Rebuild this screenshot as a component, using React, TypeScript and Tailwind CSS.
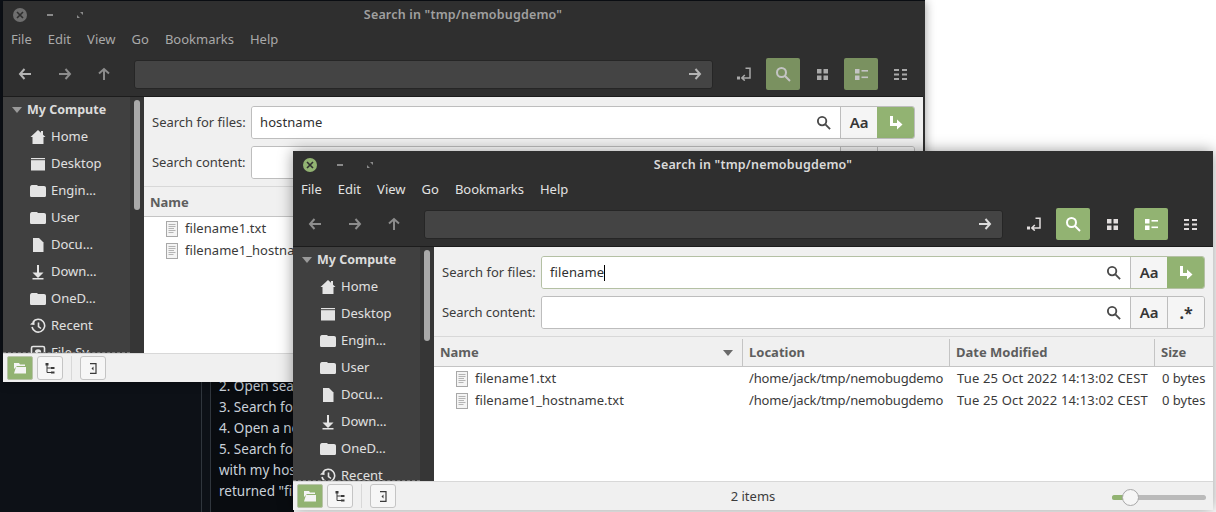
import React from "react";

const font = { fontFamily: '"Noto Sans", sans-serif' };

function Arrow({ dir, color }: { dir: "l" | "r" | "u"; color: string }) {
  const d = dir === "l" ? "M14 8H3M7.5 3L3 8l4.5 5" : dir === "r" ? "M2 8h11M8.5 3L13 8l-4.5 5" : "M8 14V3M3 7.5L8 3l5 4.5";
  return (
    <svg width="16" height="16" viewBox="0 0 16 16" fill="none" stroke={color} strokeWidth="2">
      <path d={d} />
    </svg>
  );
}

function Search({ color, size = 16 }: { color: string; size?: number }) {
  return (
    <svg width={size} height={size} viewBox="0 0 16 16" fill="none" stroke={color} strokeWidth="2">
      <circle cx="6.5" cy="6.5" r="4.5" />
      <path d="M10 10l5 5" />
    </svg>
  );
}

function SideIcon({ kind }: { kind: string }) {
  const c = "#e4e4e4";
  let body: React.ReactNode = null;
  if (kind === "home") body = <path fill={c} d="M8 1L0.5 8H2.5V15H13.5V8H15.5L13 5.7V2H11V3.8Z" />;
  if (kind === "desktop") body = <><rect x="1" y="2" width="14" height="12.5" fill={c} /><rect x="1" y="3.2" width="14" height="1" fill="#404040" /></>;
  if (kind === "folder") body = <path fill={c} d="M0 4.5C0 3 .8 2 2 2H7L8 3H14C15.2 3 16 3.8 16 5V12.5C16 13.5 15.3 14 14.3 14H1.7C.7 14 0 13.5 0 12.5Z" />;
  if (kind === "doc") body = <path fill={c} d="M3 1H9L13.5 5.5V15H3Z" />;
  if (kind === "down") body = <path fill={c} d="M7 1H9V8.5H13.5L8 14L2.5 8.5H7ZM2.5 14H13.5V15.5H2.5Z" />;
  if (kind === "recent") body = <g fill="none" stroke={c} strokeWidth="1.6"><path d="M3 4A6.4 6.4 0 1 1 2 9" /><path d="M8.5 4.5V8.5L11 10.5" /><path fill={c} stroke="none" d="M0 6.5L4.5 2.5V7Z" /></g>;
  if (kind === "disk") body = <g><rect x="1.5" y="1.5" width="13" height="13" rx="1.5" fill="none" stroke={c} strokeWidth="1.6" /><circle cx="8" cy="7.5" r="3.2" fill={c} /></g>;
  return <svg width="16" height="16" viewBox="0 0 16 16" className="shrink-0">{body}</svg>;
}

function FileIcon() {
  return (
    <svg width="12" height="16" viewBox="0 0 12 16" className="shrink-0">
      <rect x="0.5" y="0.5" width="11" height="15" fill="#f4f4f4" stroke="#a8a8a8" />
      <path d="M2.5 3.5H9.5M2.5 5.5H9.5M2.5 7.5H8M2.5 9.5H9.5M2.5 11.5H7.5" stroke="#b4b4b4" strokeWidth="1" />
    </svg>
  );
}

const places = [
  ["home", "Home"],
  ["desktop", "Desktop"],
  ["folder", "Engin…"],
  ["folder", "User"],
  ["doc", "Docu…"],
  ["down", "Down…"],
  ["folder", "OneD…"],
  ["recent", "Recent"],
  ["disk", "File Sy…"],
];

function ToggleBox({ active, on, children }: { active: boolean; on?: boolean; children: React.ReactNode }) {
  const bg = on ? (active ? "bg-[#92b372]" : "bg-[#7a9160]") : "";
  return <div className={`w-[34px] h-[32px] rounded-[2px] flex items-center justify-center shrink-0 ${bg}`}>{children}</div>;
}

function Entry({ value, caret, focus, last }: { value?: string; caret?: boolean; focus?: boolean; last: React.ReactNode }) {
  return (
    <div className={`flex-1 h-[33px] flex rounded-[3px] border ${focus ? "border-[#b4c0a4]" : "border-[#bdbdbd]"} overflow-hidden`}>
      <div className="flex-1 bg-white flex items-center pl-2 pr-[9px] text-[13px] tracking-[0.1px] text-[#303030]">
        <span>{value}</span>
        {caret && <span className="w-px h-[16px] bg-black" />}
        <span className="ml-auto"><Search color="#4a4a4a" size={15} /></span>
      </div>
      <div className="w-[37px] border-l border-[#bdbdbd] bg-[#f5f5f5] flex items-center justify-center text-[15px] font-semibold tracking-[-0.3px] text-[#353535]">
        Aa
      </div>
      {last}
    </div>
  );
}

function Win({ active, value, caret, items, className, title, thumb }: { active: boolean; value: string; caret?: boolean; items: boolean; className: string; title: string; thumb: string }) {
  const menuText = active ? "text-[#e2e2e2]" : "text-[#a9a9a9]";
  const tool = active ? "#e2dede" : "#a9a9a9";
  const disabled = "#8c8c8c";
  return (
    <div className={`absolute flex flex-col bg-[#2f2f2f] overflow-hidden ${className}`} style={font}>
      <div className="h-[29px] shrink-0 flex items-center relative pb-[2px]">
        <div className={`ml-[10px] w-[14px] h-[14px] rounded-full flex items-center justify-center ${active ? "bg-[#92b372]" : "bg-[#6f6f6f]"}`}>
          <svg width="8" height="8" viewBox="0 0 8 8" stroke="#2f2f2f" strokeWidth="1.6"><path d="M1 1l6 6M7 1L1 7" /></svg>
        </div>
        <div className="ml-[20px] w-[6px] h-[2px] bg-[#8a8a8a]" />
        <svg width="6" height="6" viewBox="0 0 6 6" className="ml-[24px]" fill="#8a8a8a"><path d="M3 0H6V3ZM0 3V6H3Z" /></svg>
        <div className={`absolute inset-0 flex items-center justify-center text-[12.5px] font-semibold tracking-[0.18px] ${active ? "text-[#dadada]" : "text-[#a0a0a0]"}`}>{title}</div>
      </div>
      <div className={`h-[19px] shrink-0 flex items-center pl-[8px] gap-[16px] text-[13px] ${menuText}`}>
        {["File", "Edit", "View", "Go", "Bookmarks", "Help"].map((m) => <span key={m}>{m}</span>)}
      </div>
      <div className="h-[48px] shrink-0 flex items-center border-b border-[#1c1c1c] pt-[4px] pb-px">
        <div className="flex items-center w-[131px] pl-[14px] gap-[23.5px]">
          <Arrow dir="l" color={active ? "#8e8e8e" : "#b5b5b5"} />
          <Arrow dir="r" color={disabled} />
          <Arrow dir="u" color={disabled} />
        </div>
        <div className="w-[579px] h-[29px] rounded-[3px] bg-[#444444] border border-[#262626] flex items-center justify-end pr-[9px]">
          <Arrow dir="r" color={active ? "#dcdcdc" : "#b5b5b5"} />
        </div>
        <div className="ml-[9px] w-[44px] flex justify-center">
          <svg width="14" height="14" viewBox="0 0 14 14" fill="none" stroke={tool} strokeWidth="1.5">
            <path d="M8.5 1.2H13V11H5M7.8 8L4.8 11L7.8 13.6" />
            <rect x="0" y="9.5" width="3" height="3" fill={tool} stroke="none" />
          </svg>
        </div>
        <ToggleBox active={active} on><Search color={active ? "#ffffff" : "#c4c4c4"} /></ToggleBox>
        <div className="w-[44px] flex justify-center">
          <svg width="11" height="11" viewBox="0 0 11 11" fill={tool}><rect width="4.5" height="4.5" /><rect x="6.5" width="4.5" height="4.5" /><rect y="6.5" width="4.5" height="4.5" /><rect x="6.5" y="6.5" width="4.5" height="4.5" /></svg>
        </div>
        <ToggleBox active={active} on>
          <svg width="13" height="11" viewBox="0 0 13 11" fill={active ? "#ffffff" : "#c4c4c4"}><rect width="4.5" height="4.5" /><rect y="6.5" width="4.5" height="4.5" /><rect x="6.5" y="1" width="6.5" height="1.6" /><rect x="6.5" y="7.5" width="6.5" height="1.6" /></svg>
        </ToggleBox>
        <div className="w-[44px] flex justify-center">
          <svg width="13" height="11" viewBox="0 0 13 11" fill={tool}><rect width="5" height="2" /><rect x="8" width="5" height="2" /><rect y="4.5" width="5" height="2" /><rect x="8" y="4.5" width="5" height="2" /><rect y="9" width="5" height="2" /><rect x="8" y="9" width="5" height="2" /></svg>
        </div>
      </div>
      <div className="flex-1 min-h-0 flex">
        <div className="w-[141px] shrink-0 flex bg-[#404040] overflow-hidden relative">
          <div className="w-[127px] shrink-0 pt-px">
            <div className="h-[24px] mb-px flex items-center pl-[9px] gap-[5px]">
              <svg width="10" height="6" viewBox="0 0 10 6" fill="#9a9a9a"><path d="M0 0H10L5 6Z" /></svg>
              <span className="text-[12.5px] font-bold text-[#dcdcdc] whitespace-nowrap">My Compute</span>
            </div>
            {places.map(([k, t]) => (
              <div key={t} className="h-[27px] flex items-center pl-[27px] gap-[5px] text-[13px] text-[#e0e0e0] whitespace-nowrap">
                <SideIcon kind={k} />
                <span>{t}</span>
              </div>
            ))}
          </div>
          <div className="flex-1 bg-[#363636] flex justify-center pt-[3px]">
            <div className={`w-[6px] rounded-full bg-[#a8a8a8] ${thumb}`} />
          </div>
          <div className="absolute left-0 right-[14px] bottom-0 border-b border-dashed border-[#7a7a7a]" />
        </div>
        <div className="flex-1 min-w-0 flex flex-col bg-white">
          <div className="h-[90px] shrink-0 bg-[#f0f0f0] border-b border-[#d8d8d8] flex flex-col pl-2 pr-2 pt-[9px] gap-[7px] text-[13px] text-[#3c3c3c]">
            <div className="flex items-center">
              <span className="w-[99px] shrink-0">Search for files:</span>
              <Entry value={value} caret={caret} focus={active} last={
                <div className="w-[37px] bg-[#92b372] flex items-center justify-center">
                  <svg width="14" height="14" viewBox="0 0 14 14" fill="#ffffff"><path d="M1 0H4V7H8V3.5L13.5 8.5L8 13.5V10H1Z" /></svg>
                </div>
              } />
            </div>
            <div className="flex items-center">
              <span className="w-[99px] shrink-0 tracking-[-0.1px]">Search content:</span>
              <Entry last={
                <div className="w-[37px] border-l border-[#bdbdbd] bg-[#f5f5f5] flex items-center justify-center text-[16px] font-bold text-[#353535]">.*</div>
              } />
            </div>
          </div>
          <div className="h-[30px] shrink-0 flex bg-[#f0f0f0] border-b border-[#c4c4c4] pt-[2px] text-[13px] font-bold text-[#5e5e5e]">
            <div className="w-[309px] shrink-0 flex items-center pl-[6px] border-r border-[#c4c4c4]">
              <span>Name</span>
              <svg width="10" height="6" viewBox="0 0 10 6" fill="#6a6a6a" className="ml-auto mr-[9px]"><path d="M0 0H10L5 6Z" /></svg>
            </div>
            <div className="w-[207px] shrink-0 flex items-center pl-[6px] border-r border-[#c4c4c4]">Location</div>
            <div className="w-[205px] shrink-0 flex items-center pl-[6px] border-r border-[#c4c4c4]">Date Modified</div>
            <div className="flex-1 flex items-center pl-[6px]">Size</div>
          </div>
          <div className="flex-1 min-h-0 pt-px text-[13px] text-[#3a3a3a] whitespace-nowrap">
            {["filename1.txt", "filename1_hostname.txt"].map((f) => (
              <div key={f} className="h-[22px] flex items-center">
                <div className="w-[309px] shrink-0 flex items-center pl-[22px] gap-[7px]">
                  <FileIcon />
                  <span className="tracking-[0.05px]">{f}</span>
                </div>
                <div className="w-[207px] shrink-0 pl-[6px] tracking-[-0.15px]">/home/jack/tmp/nemobugdemo</div>
                <div className="w-[205px] shrink-0 pl-[7px] tracking-[0.17px]">Tue 25 Oct 2022 14:13:02 CEST</div>
                <div className="pl-[7px]">0 bytes</div>
              </div>
            ))}
          </div>
        </div>
      </div>
      <div className="h-[29px] shrink-0 bg-[#f0f0f0] border-t border-[#d8d8d8] flex items-center pl-[4px] relative">
        <div className="w-[26px] h-[24px] rounded-[2px] bg-[#92b372] border border-[#b8c4a8] flex items-center justify-center">
          <svg width="12" height="11" viewBox="0 0 12 11" fill="#f4f4f4"><path d="M0 0H5L6 1.5H11V3H3L0 6Z M2 4H12V10.5H0Z" /></svg>
        </div>
        <div className="ml-[4px] w-[26px] h-[24px] rounded-[3px] bg-[#f6f6f6] border border-[#c4c4c4] flex items-center justify-center">
          <svg width="10" height="11" viewBox="0 0 10 11" fill="none" stroke="#3a3a3a"><path d="M2 1V9.5H6M2 5H6" /><rect x="0.5" y="0" width="3" height="2.5" fill="#3a3a3a" stroke="none" /><rect x="6" y="4" width="3.5" height="2" fill="#3a3a3a" stroke="none" /><rect x="6" y="8.5" width="3.5" height="2" fill="#3a3a3a" stroke="none" /></svg>
        </div>
        <div className="ml-[8px] w-px h-[24px] bg-[#d8d8d8]" />
        <div className="ml-[8px] w-[26px] h-[24px] rounded-[3px] bg-[#f6f6f6] border border-[#c4c4c4] flex items-center justify-center">
          <svg width="8" height="11" viewBox="0 0 8 11" fill="none" stroke="#3a3a3a" strokeWidth="1.2"><path d="M1 0.6H7V10.4H1" /><path d="M4.5 3.5L2.5 5.5L4.5 7.5" fill="#3a3a3a" stroke="none" /></svg>
        </div>
        {items && (
          <>
            <div className="absolute inset-0 pt-px flex items-center justify-center text-[13px] text-[#3c3c3c]">2 items</div>
            <div className="absolute right-[7px] top-[13px] w-[94px] h-[5px] rounded-full bg-[#bababa]">
              <div className="h-full w-[18px] rounded-full bg-[#92b372]" />
              <div className="absolute left-[10px] top-[-6px] w-[17px] h-[17px] rounded-full bg-[#f6f6f6] border border-[#a8a8a8]" />
            </div>
          </>
        )}
      </div>
    </div>
  );
}

export default function App() {
  const lines = ["2. Open search", "3. Search for", "4. Open a new", "5. Search for", "with my hostname", "returned \"filename"];
  return (
    <div className="relative w-[1216px] h-[512px] overflow-hidden bg-white" style={font}>
      <div className="absolute left-0 top-0 w-[294px] h-full bg-[#0d1117] flex">
        <div className="w-[202px] shrink-0 h-full border-r border-[#30363d]" />
        <div className="w-[9px] shrink-0 h-full border-r border-[#30363d]" />
        <div className="flex-1 min-w-0 bg-[#090c10] pl-[8px] pt-[376px] text-[13.5px] leading-[21px] text-[#c9d1d9] whitespace-nowrap overflow-hidden">
          {lines.map((l) => <div key={l}>{l}</div>)}
        </div>
      </div>
      <div className="absolute left-0 top-0 w-[925px] h-px bg-[#0d1117]" />
      <Win active={false} value="hostname" items={false} thumb="h-[110px]" title={'Search in "tmp/nemobugdemo"'} className="left-[3px] top-[1px] w-[922px] h-[381px] border-r-2 border-[#2f2f2f] shadow-[0_0_10px_rgba(0,0,0,0.4)]" />
      <Win active value="filename" caret items thumb="h-[91px]" title={'Search in "tmp/nemobugdemo"'} className="left-[293px] top-[151px] w-[920px] h-[359px] shadow-[0_0_14px_rgba(0,0,0,0.4)]" />
    </div>
  );
}
